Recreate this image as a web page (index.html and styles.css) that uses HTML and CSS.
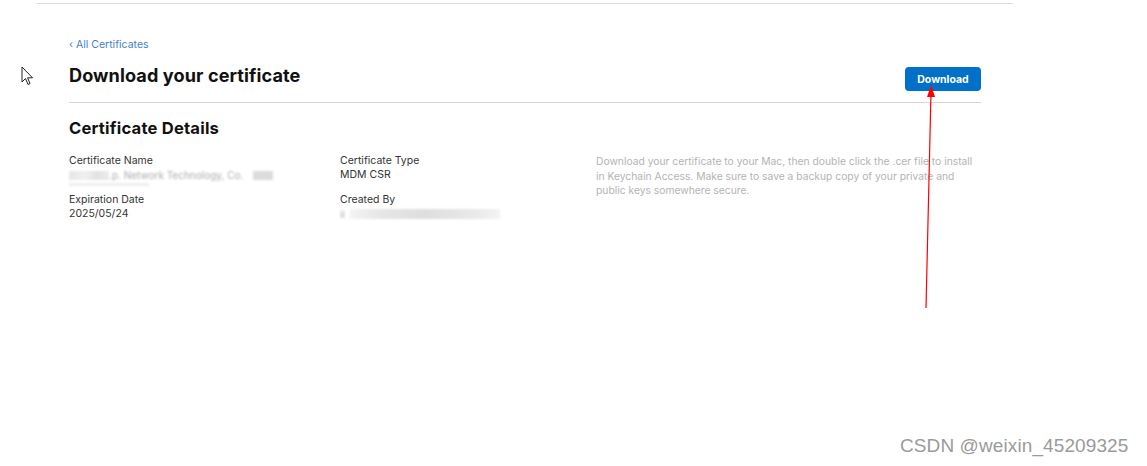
FILE: index.html
```html
<!DOCTYPE html>
<html>
<head>
<meta charset="utf-8">
<link rel="stylesheet" href="styles.css">
</head>
<body>
<div class="topline"></div>
<main class="page">
  <a class="back" href="#">&lsaquo; All Certificates</a>
  <div class="head">
    <h1 class="title">Download your certificate</h1>
    <button class="btn">Download</button>
  </div>
  <h2 class="sub">Certificate Details</h2>
  <div class="details">
    <div class="col col1">
      <div class="field">
        <div class="label">Certificate Name</div>
        <div class="value blurwrap"><span class="blur b1"></span><span class="blurtext">.p. Network Technology, Co.</span><span class="blur b2"></span></div>
        <div class="blur b3"></div>
      </div>
      <div class="field">
        <div class="label">Expiration Date</div>
        <div class="value">2025/05/24</div>
      </div>
    </div>
    <div class="col col2">
      <div class="field">
        <div class="label">Certificate Type</div>
        <div class="value">MDM CSR</div>
      </div>
      <div class="field">
        <div class="label">Created By</div>
        <div class="value blurwrap"><span class="blurtext small">ii</span><span class="blur b4"></span></div>
      </div>
    </div>
    <p class="desc">Download your certificate to your Mac, then double click the .cer file to install in Keychain Access. Make sure to save a backup copy of your private and public keys somewhere secure.</p>
  </div>
</main>
<svg class="cursor" width="14" height="20" viewBox="0 0 14 20"><path d="M1 1 L1 16 L4.5 12.5 L7 18.5 L9 17.6 L6.6 11.8 L11.5 11.8 Z" fill="#fff" stroke="#222" stroke-width="1" stroke-linejoin="round"/></svg>
<svg class="arrow" width="20" height="230" viewBox="0 0 20 230"><line x1="6" y1="224" x2="11" y2="8" stroke="#f00" stroke-width="1.2"/><path d="M11 1 L15 13 L7 13 Z" fill="#f00"/></svg>
<div class="watermark">CSDN @weixin_45209325</div>
</body>
</html>
```
FILE: styles.css
```css
html, body { margin: 0; padding: 0; background: #fff; }
body {
  width: 1147px; height: 466px; overflow: hidden; position: relative;
  font-family: Inter, "Liberation Sans", Arial, sans-serif;
  color: #1d1d1f;
}
.topline { margin-left: 37px; margin-top: 3px; width: 976px; height: 0; border-top: 1px solid #ddd; }
.page { margin-left: 69px; width: 912px; padding-top: 34px; }
.back { display: block; font-size: 10.5px; color: #3f7fd0; text-decoration: none; line-height: 14px; }
.head {
  display: flex; justify-content: space-between; align-items: flex-start;
  margin-top: 10px; padding-bottom: 11px; border-bottom: 1px solid #d6d6d6;
}
.title { margin: 0; font-size: 18.1px; font-weight: 700; line-height: 26px; letter-spacing: 0.1px; color: #111; }
.btn {
  margin-top: 5px; width: 76px; height: 24px; border: 0; border-radius: 4px;
  background: #0070c9; color: #fff; font-family: inherit; font-size: 10.5px; font-weight: 700;
  padding: 0; cursor: pointer;
}
.sub { margin: 14px 0 0; font-size: 16.6px; font-weight: 700; line-height: 22px; letter-spacing: 0.2px; color: #111; }
.details { display: flex; margin-top: 15px; }
.col { display: flex; flex-direction: column; gap: 11px; }
.col1 { width: 271px; }
.col2 { width: 256px; }
.label { font-size: 10.5px; line-height: 14px; color: #333; }
.value { font-size: 10.5px; line-height: 14px; color: #333; height: 14px; }
.blurwrap { display: flex; align-items: center; position: relative; }
.blur { display: block; background: linear-gradient(90deg, #e6e6e6, #f0f0f0 40%, #e2e2e2 70%, #ececec); filter: blur(1px); }
.b1 { width: 40px; height: 9px; }
.blurtext { color: #aaa; filter: blur(0.8px); font-size: 10px; white-space: nowrap; }
.blurtext.small { width: 10px; overflow: hidden; }
.b2 { width: 20px; height: 9px; margin-left: 10px; background: #dcdcdc; }
.b3 { width: 80px; height: 3px; margin-top: 1px; margin-bottom: -4px; background: #eee; }
.b4 { width: 150px; height: 10px; background: linear-gradient(90deg, #f4f4f4, #e6e6e6 20%, #dedede 50%, #e8e8e8 80%, #f3f3f3); }
.desc { margin: 0; width: 380px; font-size: 10.3px; line-height: 14.5px; color: #b4b4b4; }
.cursor { position: absolute; left: 21px; top: 66px; }
.arrow { position: absolute; left: 920px; top: 84px; }
.watermark {
  position: absolute; left: 900px; top: 435px; font-family: "Liberation Sans", Arial, sans-serif;
  font-size: 19px; color: #9a9a9a; text-shadow: 0 0 1px #fff; letter-spacing: 0.1px;
}
```
